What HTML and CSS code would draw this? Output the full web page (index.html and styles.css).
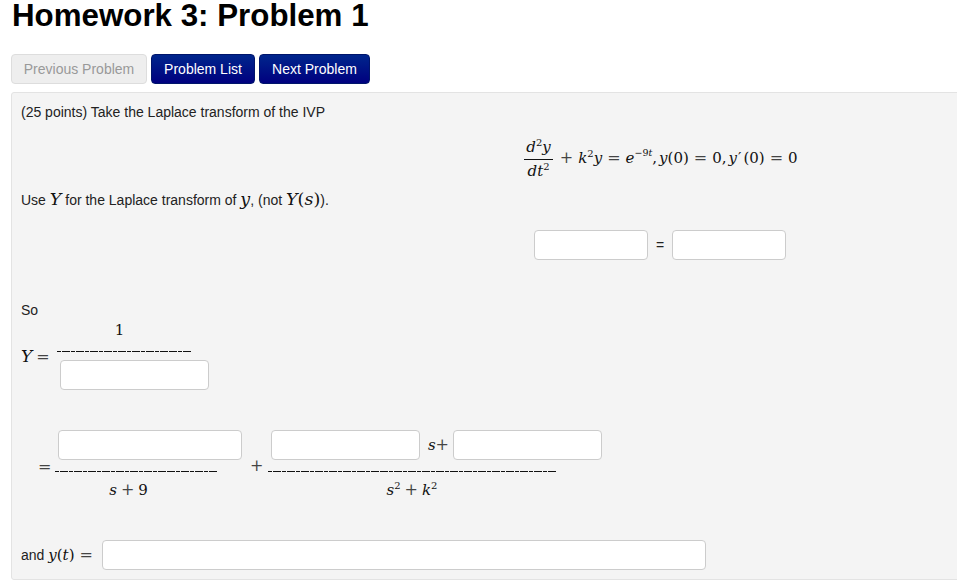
FILE: index.html
```html
<!DOCTYPE html>
<html lang="en">
<head>
<meta charset="utf-8">
<title>Homework 3: Problem 1</title>
<link rel="stylesheet" href="styles.css">
</head>
<body>
<h1 class="title">Homework 3: Problem 1</h1>
<nav class="nav">
  <span class="btn btn-off b-prev">Previous Problem</span>
  <span class="btn b-list">Problem List</span>
  <span class="btn b-next">Next Problem</span>
</nav>
<main class="panel">
  <p class="intro">(25 points) Take the Laplace transform of the IVP</p>
  <div class="display">
    <span class="math eq"><span class="dfrac"><span class="dnum"><i>d</i><sup>2</sup><i>y</i></span><span class="dden"><i>dt</i><sup>2</sup></span></span><span class="op">+</span><i>k</i><sup>2</sup><i>y</i><span class="op">=</span><i>e</i><sup class="exp">−9<i>t</i></sup><span class="comma">,</span><i>y</i>(0)<span class="op">=</span>0<span class="comma">,</span><i>y</i><span class="prime">′</span>(0)<span class="op">=</span>0</span>
  </div>
  <p class="use">Use <i class="math big">Y</i> for the Laplace transform of <i class="math big">y</i>, (not <span class="math big"><i>Y</i>(<i>s</i>)</span>).</p>
  <div class="eqrow">
    <input class="field w114" type="text">
    <span>=</span>
    <input class="field w114" type="text">
  </div>
  <p class="so">So</p>
  <div class="fracrow first">
    <span class="math lhs"><i class="cap">Y</i><span class="op">=</span></span>
    <div class="frac">
      <div class="num center math">1</div>
      <div class="rule r135"></div>
      <input class="field w149 inset" type="text">
    </div>
  </div>
  <div class="fracrow second">
    <span class="math eqsign op-flat">=</span>
    <div class="frac">
      <input class="field w184 inset" type="text">
      <div class="rule r163"></div>
      <div class="den d1 math"><i>s</i><span class="op">+</span>9</div>
    </div>
    <span class="math plus op-flat">+</span>
    <div class="frac">
      <div class="numline">
        <input class="field w149" type="text">
        <span class="math sp"><i>s</i><span class="op-flat">+</span></span>
        <input class="field w149" type="text">
      </div>
      <div class="rule r288"></div>
      <div class="den d2 math"><i>s</i><sup>2</sup><span class="op">+</span><i>k</i><sup>2</sup></div>
    </div>
  </div>
  <div class="answer">
    <span class="answer-label">and <span class="math"><i>y</i>(<i>t</i>)</span><span class="math op">=</span></span>
    <input class="field w604" type="text">
  </div>
</main>
</body>
</html>
```
FILE: styles.css
```css
html, body { margin: 0; padding: 0; overflow: hidden; background: #fff; }
body {
  width: 957px;
  height: 586px;
  font-family: "Liberation Sans", Arial, sans-serif;
  font-size: 14px;
  line-height: 20px;
  color: #222;
}
.title {
  margin: 0 0 0 12px;
  height: 54px;
  font-size: 31.3px;
  line-height: 32px;
  font-weight: 700;
  color: #000;
}
.nav { display: flex; gap: 4px; margin-left: 11px; }
.btn {
  height: 30px;
  box-sizing: border-box;
  padding-top: 4px;
  border: 1px solid #00156b;
  border-radius: 4px;
  background: linear-gradient(#00268c, #00007f);
  color: #fff;
  text-align: center;
}
.b-prev { width: 136px; }
.b-list { width: 104px; }
.b-next { width: 111px; }
.btn-off {
  border-color: #ddd;
  background: #eee;
  color: #999;
}
.panel {
  box-sizing: border-box;
  width: 1300px;
  height: 488px;
  margin: 8px 0 0 11px;
  padding: 9px 9px;
  background: #f4f4f4;
  border: 1px solid #e3e3e3;
  border-radius: 3px;
}
p { margin: 0; }
.math { font-family: "DejaVu Serif", "Liberation Serif", serif; font-size: 15px; color: #111; }
.big { font-size: 17.5px; line-height: 0; }
.cap { font-size: 17px; }
.math sup { font-size: 10px; line-height: 0; vertical-align: 6px; }
.math sup.exp { font-size: 9.5px; vertical-align: 7px; }
.op { margin: 0 5px; font-size: 16px; color: #444; }
.den .op { margin: 0 4px; }
.op-flat { font-size: 16px; color: #444; }
.comma { margin-right: 2px; }
.prime { margin: 0 2px 0 1px; }
.display { display: flex; justify-content: center; margin-top: 12px; height: 36px; }
.eq { white-space: pre; line-height: 47px; height: 47px; }
.dfrac { display: inline-flex; flex-direction: column; align-items: center; vertical-align: middle; margin-right: 2px; line-height: 20px; }
.dnum { border-bottom: 1px solid #111; padding: 0 2px 2px; line-height: 20px; }
.dden { line-height: 22px; }
.use { margin-top: 20px; height: 20px; line-height: 20px; white-space: pre-wrap; }
.eqrow { display: flex; justify-content: center; align-items: center; gap: 8px; margin-top: 20px; padding-right: 2px; }
.field {
  display: block;
  box-sizing: border-box;
  height: 30px;
  margin: 0;
  padding: 0;
  background: #fff;
  border: 1px solid #ccc;
  border-radius: 4px;
}
.w114 { width: 114px; }
.w149 { width: 149px; }
.w184 { width: 184px; }
.w604 { width: 604px; }
.so { margin-top: 40px; }
.fracrow { display: flex; align-items: center; }
.second { margin-top: 40px; }
.lhs { width: 36px; white-space: pre; padding-top: 2px; }
.lhs .op { margin: 0 0 0 4px; }
.eqsign { width: 17px; margin-left: 17px; padding-top: 3px; }
.frac { display: flex; flex-direction: column; align-items: flex-start; }
.num { width: 125px; height: 20px; }
.center { text-align: center; }
.rule {
  height: 1px;
  margin: 11px 0 8px;
  background: repeating-linear-gradient(to right, #111 0 4px, transparent 4px 4.66px);
}
.r135 { width: 135px; }
.r163 { width: 163px; }
.r288 { width: 288px; }
.inset { margin-left: 3px; }
.den { height: 20px; text-align: center; }
.d1 { width: 147px; }
.d2 { width: 288px; }
.plus { margin: 0 7px 0 8px; width: 11px; padding-top: 2px; }
.numline { display: flex; align-items: center; margin-left: 3px; }
.sp { width: 33px; text-align: right; padding-right: 4px; box-sizing: border-box; }
.answer { display: flex; align-items: center; gap: 4px; margin-top: 40px; }
.answer-label { white-space: pre; }
```
